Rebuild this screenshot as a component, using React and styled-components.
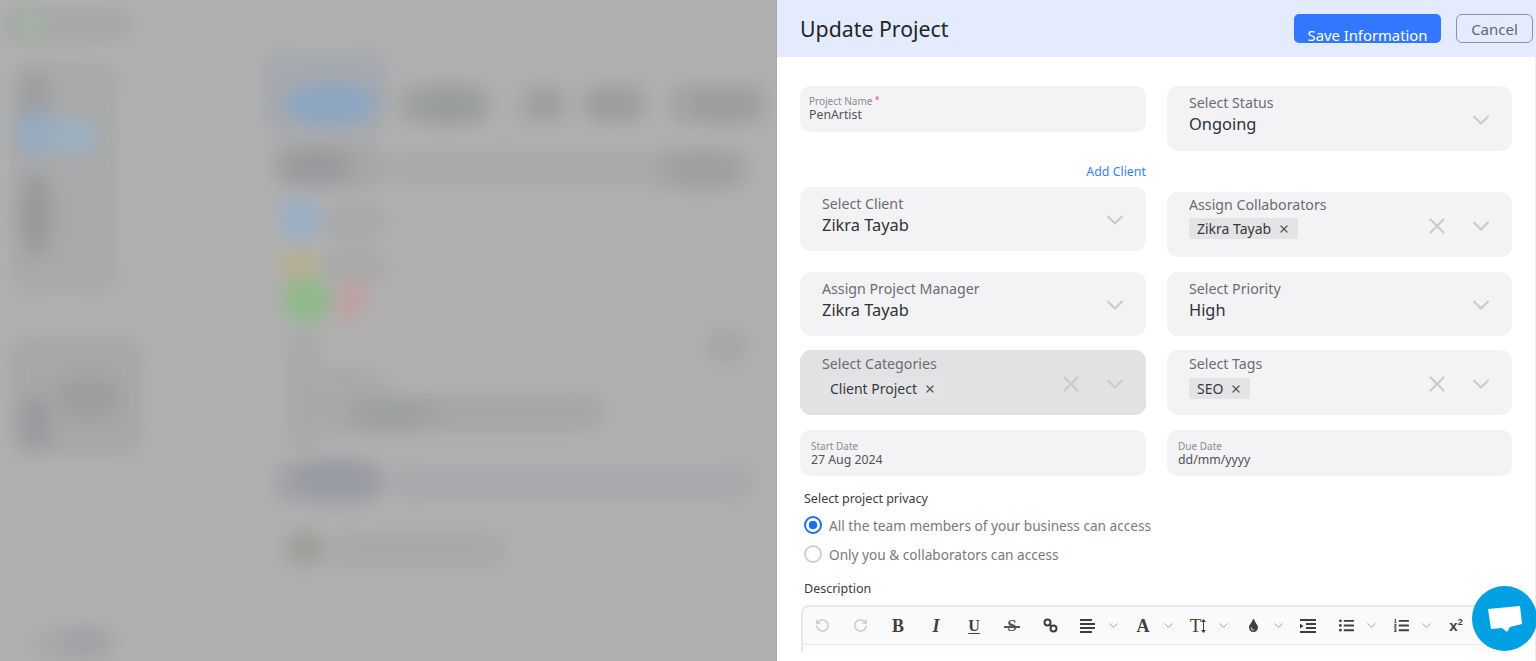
import React from "react";
import styled, { createGlobalStyle } from "styled-components";
import { ChevronDown, X, RotateCcw, RotateCw } from "lucide-react";
import { FaTint, FaListUl, FaListOl } from "react-icons/fa";

const Global = createGlobalStyle`
html, body { margin: 0; height: 100%; overflow: hidden; background: #b0b0b0; }
* { box-sizing: border-box; }
`;

const Page = styled.div`
display: flex;
position: relative;
height: 100vh;
overflow: hidden;
font-family: "Noto Sans", "Open Sans", sans-serif;`;

const Backdrop = styled.div`
flex: 0 0 777px;
background: #b0b0b0;
border-right: 1px solid #a8a8a8;
overflow: hidden;`;

const Panel = styled.div`
flex: 1;
display: flex;
flex-direction: column;
background: #fff;
overflow: hidden;
border-right: 1px solid #eeeeee;`;

const Header = styled.div`
flex: 0 0 57px;
display: flex;
align-items: flex-start;
background: #e4ebfd;
padding: 14px 2px 0 23px;`;

const Title = styled.h1`
flex: 1;
margin: 0;
font-size: 21.3px;
line-height: 30px;
font-weight: 400;
color: #22252b;`;

const SaveButton = styled.button`
width: 147px;
height: 29px;
padding: 13px 0 0;
border: none;
border-radius: 5px;
background: #3377ff;
color: #fff;
font-family: inherit;
font-size: 14.8px;
line-height: 16px;`;

const CancelButton = styled.button`
width: 77px;
height: 29px;
margin-left: 15px;
padding: 0;
border: 1px solid #8c93a3;
border-radius: 6px;
background: transparent;
color: #62666e;
font-family: inherit;
font-size: 15px;`;

const Body = styled.div`
padding: 29px 21px 0 23px;`;

const Columns = styled.div`
display: grid;
grid-template-columns: 346px 345px;
column-gap: 21px;
margin-top: ${props => props.$top || "0"};`;

const Column = styled.div`
display: flex;
flex-direction: column;`;

const Field = styled.div`
display: flex;
align-items: center;
height: ${props => props.$height || "64px"};
margin-top: ${props => props.$top || "0"};
padding: 0 22px;
border-radius: 11px;
background: ${props => props.$active ? "#e2e2e5" : "#f3f3f6"};`;

const FieldText = styled.div`
flex: 1;
min-width: 0;
align-self: flex-start;
padding-top: ${props => props.$padTop || "7px"};`;

const FieldLabel = styled.div`
font-size: 14.2px;
line-height: 20px;
color: #6a6c72;`;

const FieldValue = styled.div`
font-size: 16.4px;
line-height: 22px;
color: #303236;`;

const InputField = styled.div`
display: flex;
flex-direction: column;
justify-content: center;
height: 46px;
padding: 0 9px ${props => props.$padBottom || "0"} ${props => props.$padLeft || "11px"};
border-radius: 10px;
background: #f3f3f6;`;

const InputLabel = styled.div`
margin-bottom: 1px;
font-size: 10px;
line-height: 12px;
color: #8a8c92;`;

const Required = styled.span`
font-size: 8px;
vertical-align: 2px;
color: #e05050;`;

const InputValue = styled.div`
font-size: 12.3px;
line-height: 14px;
color: #505257;`;

const LinkRow = styled.div`
margin-top: 32px;
text-align: right;
font-size: 12.4px;
line-height: 16px;
color: #3a80f5;`;

const ChipRow = styled.div`
display: flex;
margin-top: ${props => props.$top || "4px"};`;

const Chip = styled.div`
display: flex;
align-items: center;
gap: 7px;
height: 21px;
padding: 0 8px;
border-radius: 2px;
background: #e4e4e7;
font-size: 14px;
color: #38393d;`;

const Controls = styled.div`
display: flex;
align-items: center;
gap: 17px;
margin: 2px -5px 0 0;
color: #c9cacd;`;

const SectionLabel = styled.div`
margin: ${props => props.$margin || "0"};
padding-left: 4px;
font-size: 12.5px;
line-height: 18px;
color: #3a3c40;`;

const RadioRow = styled.div`
display: flex;
align-items: center;
gap: 7px;
height: 29px;
padding-left: 4px;
font-size: 13.65px;
color: #77797e;`;

const RadioText = styled.span`
padding-top: 2px;`;

const Radio = styled.span`
flex: 0 0 18px;
height: 18px;
border-radius: 50%;
border: ${props => props.$checked ? "2.5px solid #1a6ff0" : "2px solid #cfcfd2"};
background: ${props => props.$checked ? "radial-gradient(circle, #1a6ff0 0 4px, #fff 4.6px)" : "#fff"};`;

const Editor = styled.div`
margin-top: 7px;
margin-left: 1px;
border-top: 2px solid #e7e8ee;
border-left: 2px solid #e7e8ee;
border-top-left-radius: 8px;
border-top-right-radius: 8px;
background: #fafafa;`;

const Toolbar = styled.div`
display: flex;
align-items: center;
height: 38px;
border-bottom: 1px solid #ececec;`;

const EditorBody = styled.div`
height: 7px;
background: #fdfdfd;`;

const ToolButton = styled.div`
display: flex;
align-items: center;
justify-content: center;
flex: 0 0 38px;
height: 100%;
color: ${props => props.$muted ? "#c4c4c4" : "#3f3f3f"};`;

const Caret = styled.div`
display: flex;
align-items: center;
justify-content: center;
flex: 0 0 17px;
margin-left: -2px;
margin-right: 2px;
color: #a5a5a5;`;

const Glyph = styled.span`
font-family: "Liberation Serif", serif;
font-weight: ${props => props.$weight || 700};
font-size: ${props => props.$size || "18px"};
font-style: ${props => props.$italic ? "italic" : "normal"};
text-decoration: ${props => props.$deco || "none"};
text-underline-offset: 2px;
line-height: 1;`;

const StruckGlyph = styled(Glyph)`
position: relative;
color: #555;
&::after {
  content: "";
  position: absolute;
  left: -3px;
  right: -3px;
  top: 9px;
  height: 1.5px;
  background: #555;
}`;

const SansGlyph = styled.span`
font-family: "Liberation Sans", sans-serif;
font-weight: 700;
font-size: 15px;
line-height: 1;`;

const Sup = styled.sup`
font-size: 9px;
line-height: 0;`;

const ChatBubble = styled.div`
position: absolute;
left: 1472px;
top: 586px;
width: 65px;
height: 65px;
display: flex;
align-items: center;
justify-content: center;
border-radius: 50%;
background: #00a0e3;`;

// blurred page behind the drawer: [x, y, w, h, colour]
const haze = [
    [2, 8, 130, 34, "#a7a7a7"], [10, 62, 108, 232, "#a9a9a9"], [10, 338, 132, 118, "#a7a7a9"],
    [262, 50, 126, 84, "#a6a9ae"], [396, 82, 96, 44, "#a5a6a5"], [513, 84, 60, 40, "#a8a8a6"],
    [584, 82, 66, 42, "#a6a7a5"], [666, 82, 104, 44, "#a5a6a4"], [272, 140, 112, 50, "#a6a6a8"],
    [380, 152, 372, 32, "#a9a9ac"], [650, 148, 100, 42, "#a6a6a6"], [320, 204, 68, 36, "#a9a9aa"],
    [320, 248, 68, 38, "#a9a9aa"], [288, 328, 32, 124, "#a9a9a9"], [305, 370, 82, 64, "#a9a8a7"],
    [355, 394, 250, 38, "#a6a6a5"], [272, 460, 114, 44, "#a4a5a9"], [390, 466, 366, 34, "#a9a9ad"],
    [282, 530, 44, 40, "#a8a8a6"], [325, 533, 182, 34, "#a9a8a8"], [32, 628, 84, 32, "#a9a9ab"],
    [706, 328, 42, 36, "#a6a6a6"],
];

const spots = [
    [30, 25, 18, 16, "#a0b5a4"], [35, 105, 15, 34, "#9a9a9a"], [36, 133, 18, 24, "#8fabc8"],
    [72, 136, 28, 20, "#9bb0c4"], [36, 215, 15, 42, "#949494"], [36, 422, 15, 26, "#949699"],
    [88, 398, 32, 22, "#9a9b9d"], [330, 104, 46, 20, "#84a5c8"], [448, 105, 38, 16, "#969b97"],
    [545, 105, 14, 12, "#949894"], [612, 105, 28, 14, "#979b97"], [722, 105, 36, 13, "#969a96"],
    [316, 166, 36, 16, "#96969a"], [702, 170, 36, 15, "#9c9c9c"], [300, 219, 22, 21, "#95aecb"],
    [300, 266, 21, 19, "#b8ae8e"], [307, 300, 25, 23, "#88bb82"], [351, 300, 17, 21, "#c29e9e"],
    [390, 415, 44, 14, "#9a9f9c"], [336, 480, 44, 18, "#95989f"], [305, 547, 14, 14, "#989894"],
    [84, 642, 24, 14, "#9ea0a4"],
];

const BackdropArt = () => (
    <svg width="776" height="661" viewBox="0 0 776 661">
        <defs>
            <filter id="soft" x="-40%" y="-60%" width="180%" height="220%" colorInterpolationFilters="sRGB"><feGaussianBlur stdDeviation="8" /></filter>
            <filter id="softer" x="-80%" y="-80%" width="260%" height="260%" colorInterpolationFilters="sRGB"><feGaussianBlur stdDeviation="9" /></filter>
        </defs>
        <g filter="url(#soft)">
            {haze.map(([x, y, w, h, c], i) => <rect key={i} x={x} y={y} width={w} height={h} rx="20" fill={c} />)}
        </g>
        <g filter="url(#softer)" opacity="0.8">
            {spots.map(([cx, cy, rx, ry, c], i) => <ellipse key={i} cx={cx} cy={cy} rx={rx} ry={ry} fill={c} />)}
        </g>
    </svg>
);

const Chevron = () => <ChevronDown size={28} strokeWidth={1.8} color="#c9cacd" />;

const SelectField = ({ label, value, height, top }) => (
    <Field $height={height} $top={top}>
        <FieldText><FieldLabel>{label}</FieldLabel><FieldValue>{value}</FieldValue></FieldText>
        <Controls><Chevron /></Controls>
    </Field>
);

const MultiField = ({ label, chip, active, top, padTop, chipTop }) => (
    <Field $active={active} $top={top} $height="65px">
        <FieldText $padTop={padTop || "4px"}>
            <FieldLabel>{label}</FieldLabel>
            <ChipRow $top={chipTop}>
                <Chip>{chip}<X size={12} strokeWidth={2.6} color="#55565a" /></Chip>
            </ChipRow>
        </FieldText>
        <Controls><X size={26} strokeWidth={2} /><Chevron /></Controls>
    </Field>
);

const AlignIcon = () => (
    <svg width="16" height="14" viewBox="0 0 16 14" fill="#3f3f3f">
        <rect y="0" width="12" height="2" /><rect y="4" width="15" height="2" />
        <rect y="8" width="15" height="2" /><rect y="12" width="12" height="2" />
    </svg>
);

const LinkIcon = () => (
    <svg width="15" height="15" viewBox="0 0 15 15" fill="none" stroke="#3f3f3f" strokeWidth="2">
        <circle cx="4.5" cy="4.5" r="3" /><circle cx="10.5" cy="10.5" r="3" /><path d="M6.5 6.5l2 2" />
    </svg>
);

const IndentIcon = () => (
    <svg width="16" height="14" viewBox="0 0 16 14" fill="#3f3f3f">
        <rect width="16" height="2" /><rect x="6" y="4" width="10" height="2" /><rect x="6" y="8" width="10" height="2" />
        <rect y="12" width="16" height="2" /><path d="M0 4.5l3.5 2.5L0 9.5z" />
    </svg>
);

const HeightArrow = () => (
    <svg width="5" height="14" viewBox="0 0 5 14" fill="#3f3f3f">
        <path d="M2 2h1v10H2z" /><path d="M0 3l2.5-3L5 3zM0 11l2.5 3L5 11z" />
    </svg>
);

const Drop = () => <Caret><ChevronDown size={15} strokeWidth={1.6} /></Caret>;

const App = () => (
    <Page>
        <Global />
        <Backdrop><BackdropArt /></Backdrop>
        <Panel>
            <Header>
                <Title>Update Project</Title>
                <SaveButton>Save Information</SaveButton>
                <CancelButton>Cancel</CancelButton>
            </Header>
            <Body>
                <Columns>
                    <Column>
                        <InputField $padLeft="9px" $padBottom="2px">
                            <InputLabel>Project Name <Required>*</Required></InputLabel>
                            <InputValue>PenArtist</InputValue>
                        </InputField>
                        <LinkRow>Add Client</LinkRow>
                        <SelectField label="Select Client" value="Zikra Tayab" top="7px" />
                        <SelectField label="Assign Project Manager" value="Zikra Tayab" top="21px" />
                        <MultiField label="Select Categories" chip="Client Project" active top="14px" />
                    </Column>
                    <Column>
                        <SelectField label="Select Status" value="Ongoing" height="65px" />
                        <MultiField label="Assign Collaborators" chip="Zikra Tayab" top="41px" padTop="3px" chipTop="3px" />
                        <SelectField label="Select Priority" value="High" top="15px" />
                        <MultiField label="Select Tags" chip="SEO" top="14px" />
                    </Column>
                </Columns>
                <Columns $top="15px">
                    <InputField>
                        <InputLabel>Start Date</InputLabel>
                        <InputValue>27 Aug 2024</InputValue>
                    </InputField>
                    <InputField>
                        <InputLabel>Due Date</InputLabel>
                        <InputValue>dd/mm/yyyy</InputValue>
                    </InputField>
                </Columns>
                <SectionLabel $margin="14px 0 2px">Select project privacy</SectionLabel>
                <RadioRow><Radio $checked /><RadioText>All the team members of your business can access</RadioText></RadioRow>
                <RadioRow><Radio /><RadioText>Only you &amp; collaborators can access</RadioText></RadioRow>
                <SectionLabel $margin="12px 0 0">Description</SectionLabel>
                <Editor>
                    <Toolbar>
                        <ToolButton $muted><RotateCcw size={15} strokeWidth={2} /></ToolButton>
                        <ToolButton $muted><RotateCw size={15} strokeWidth={2} /></ToolButton>
                        <ToolButton><Glyph>B</Glyph></ToolButton>
                        <ToolButton><Glyph $italic>I</Glyph></ToolButton>
                        <ToolButton><Glyph $size="16px" $deco="underline">U</Glyph></ToolButton>
                        <ToolButton><StruckGlyph $size="17px">S</StruckGlyph></ToolButton>
                        <ToolButton><LinkIcon /></ToolButton>
                        <ToolButton><AlignIcon /></ToolButton><Drop />
                        <ToolButton><Glyph>A</Glyph></ToolButton><Drop />
                        <ToolButton><Glyph $size="19px" $weight={400}>T</Glyph><HeightArrow /></ToolButton><Drop />
                        <ToolButton><FaTint size={13} /></ToolButton><Drop />
                        <ToolButton><IndentIcon /></ToolButton>
                        <ToolButton><FaListUl size={15} /></ToolButton><Drop />
                        <ToolButton><FaListOl size={15} /></ToolButton><Drop />
                        <ToolButton><SansGlyph>x<Sup>2</Sup></SansGlyph></ToolButton>
                    </Toolbar>
                    <EditorBody />
                </Editor>
            </Body>
        </Panel>
        <ChatBubble>
            <svg width="65" height="65" viewBox="0 0 65 65">
                <path d="M16 23 L48 20 L50 38 L38 41 L35 46 L30 42 L19 43 Z" fill="#fff" />
            </svg>
        </ChatBubble>
    </Page>
);

export default App;
